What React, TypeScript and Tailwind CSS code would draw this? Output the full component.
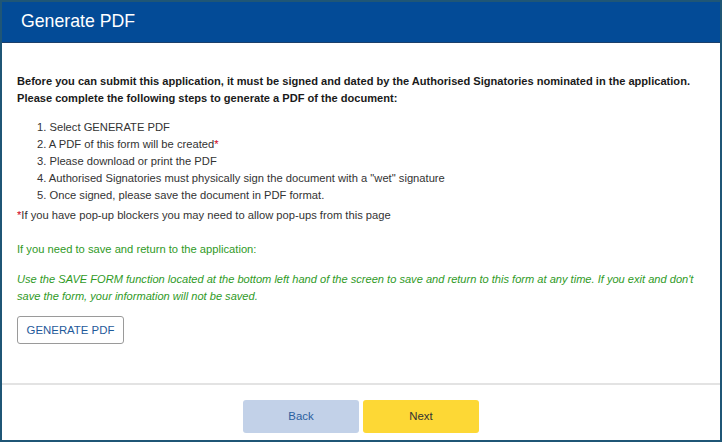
import React from 'react';

const steps = [
  'Select GENERATE PDF',
  'A PDF of this form will be created',
  'Please download or print the PDF',
  'Authorised Signatories must physically sign the document with a "wet" signature',
  'Once signed, please save the document in PDF format.',
];

const App: React.FC = () => {
  return (
    <div
      className="w-[722px] h-[442px] bg-white border-2 border-[#1f5676] flex flex-col overflow-hidden"
      style={{ fontFamily: '"Liberation Sans", Arial, sans-serif' }}
    >
      {/* Header */}
      <div className="h-[41px] shrink-0 bg-[#034b97] border-b border-[#1c3f6a] flex items-center pl-[19px]">
        <h1 className="text-[17.7px] text-white leading-none">Generate PDF</h1>
      </div>

      {/* Body */}
      <div className="flex-1 px-[15px] pt-[30px] text-[11.2px] leading-[17px] whitespace-nowrap">
        <p className="font-bold text-[11.08px] text-[#1a1a1a]">
          Before you can submit this application, it must be signed and dated by the Authorised Signatories nominated in the application.
          <br />
          Please complete the following steps to generate a PDF of the document:
        </p>

        <ol className="mt-[12px] pl-[20px] text-[#333]">
          {steps.map((step, idx) => (
            <li key={idx}>
              {idx + 1}. {step}
              {idx === 1 && <span className="text-[#d0021b]">*</span>}
            </li>
          ))}
        </ol>

        <p className="mt-[3px] text-[#333]">
          <span className="text-[#d0021b]">*</span>If you have pop-up blockers you may need to allow pop-ups from this page
        </p>

        <p className="mt-[17px] text-[#2f9a1f]">If you need to save and return to the application:</p>

        <p className="mt-[13px] italic text-[11.08px] text-[#2f9a1f]">
          Use the SAVE FORM function located at the bottom left hand of the screen to save and return to this form at any time. If you exit and don't
          <br />
          save the form, your information will not be saved.
        </p>

        <button className="mt-[11px] h-[28px] w-[107px] border border-[#9a9a9a] rounded-[3px] text-[11.4px] text-[#1f5a9a] bg-white">
          GENERATE PDF
        </button>
      </div>

      {/* Footer */}
      <div className="h-[57px] shrink-0 border-t-2 border-[#e3e3e3] flex justify-center pt-[15px] gap-[4px]">
        <button className="w-[116px] h-[33px] rounded-[3px] bg-[#c2d1e8] text-[11.4px] text-[#2b5f9e]">Back</button>
        <button className="w-[116px] h-[33px] rounded-[3px] bg-[#fdd835] text-[11.4px] text-[#333]">Next</button>
      </div>
    </div>
  );
};

export default App;
